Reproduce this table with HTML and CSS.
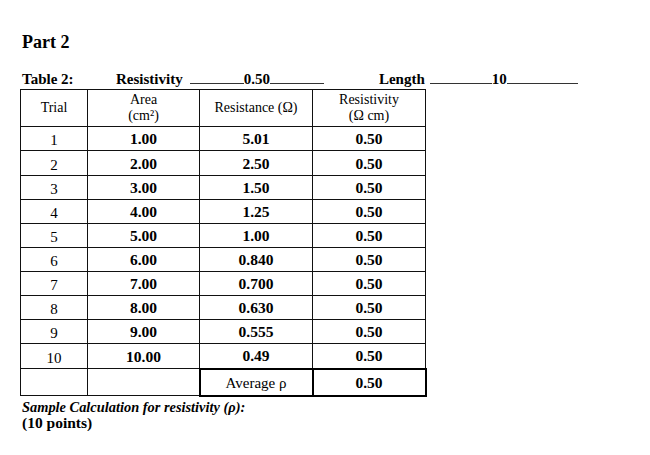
FILE: index.html
```html
<!DOCTYPE html>
<html>
<head>
<meta charset="utf-8">
<link rel="stylesheet" href="styles.css">
</head>
<body>
<div class="page">
  <h2 class="part">Part 2</h2>
  <div class="title-row">
    <span class="t-label">Table 2:</span>
    <span class="t-name">Resistivity</span>
    <span class="blank b1"></span><span class="t-val">0.50</span><span class="blank b2"></span>
    <span class="t-name t-length">Length</span>
    <span class="blank b3"></span><span class="t-val">10</span><span class="blank b4"></span>
  </div>
  <table class="data">
    <colgroup>
      <col class="c-trial"><col class="c-area"><col class="c-res"><col class="c-rho">
    </colgroup>
    <thead>
      <tr class="hdr">
        <th>Trial</th>
        <th>Area<br>(cm²)</th>
        <th>Resistance (Ω)</th>
        <th>Resistivity<br>(Ω cm)</th>
      </tr>
    </thead>
    <tbody>
      <tr class="r24"><td class="n">1</td><td>1.00</td><td>5.01</td><td>0.50</td></tr>
      <tr class="r25"><td class="n">2</td><td>2.00</td><td>2.50</td><td>0.50</td></tr>
      <tr class="r24"><td class="n">3</td><td>3.00</td><td>1.50</td><td>0.50</td></tr>
      <tr class="r24"><td class="n">4</td><td>4.00</td><td>1.25</td><td>0.50</td></tr>
      <tr class="r24"><td class="n">5</td><td>5.00</td><td>1.00</td><td>0.50</td></tr>
      <tr class="r24"><td class="n">6</td><td>6.00</td><td>0.840</td><td>0.50</td></tr>
      <tr class="r24"><td class="n">7</td><td>7.00</td><td>0.700</td><td>0.50</td></tr>
      <tr class="r24"><td class="n">8</td><td>8.00</td><td>0.630</td><td>0.50</td></tr>
      <tr class="r24"><td class="n">9</td><td>9.00</td><td>0.555</td><td>0.50</td></tr>
      <tr class="r25"><td class="n">10</td><td>10.00</td><td>0.49</td><td>0.50</td></tr>
      <tr class="avg">
        <td></td><td></td>
        <td class="avg-label">Average ρ</td>
        <td class="avg-val">0.50</td>
      </tr>
    </tbody>
  </table>
  <p class="sample">Sample Calculation for resistivity (ρ):</p>
  <p class="points">(10 points)</p>
</div>
</body>
</html>
```
FILE: styles.css
```css
html, body {
  margin: 0;
  padding: 0;
  background: #fff;
}
body {
  font-family: "Liberation Serif", "Times New Roman", serif;
  color: #000;
}
.page {
  padding: 33px 0 0 20px;
}
.part {
  margin: 0 0 0 2px;
  font-size: 18px;
  line-height: 18px;
  font-weight: bold;
}
.title-row {
  margin: 21px 0 0 2px;
  display: flex;
  align-items: baseline;
  font-size: 15px;
  line-height: 15px;
  font-weight: bold;
  height: 16px;
}
.t-label {
  width: 94px;
}
.t-name {
  display: inline-block;
}
.t-length {
  margin-left: 55px;
}
.blank {
  display: inline-block;
  height: 0;
  border-bottom: 1px solid #333;
}
.b1 { width: 54px; margin-left: 7px; }
.b2 { width: 54px; }
.b3 { width: 62px; margin-left: 5px; }
.b4 { width: 71px; }

.data {
  border-collapse: collapse;
  table-layout: fixed;
  width: 405px;
  margin-top: 1px;
}
.c-trial { width: 67px; }
.c-area { width: 112px; }
.c-res { width: 113px; }
.c-rho { width: 113px; }
.data th, .data td {
  border: 1px solid #111;
  padding: 0;
  text-align: center;
  vertical-align: middle;
}
.data th {
  font-weight: normal;
  font-size: 14px;
  line-height: 16px;
}
.hdr { height: 37px; }
.r24 { height: 24px; }
.r25 { height: 25px; }
.data td {
  font-size: 15.5px;
  line-height: 16px;
  font-weight: bold;
  padding-top: 1px;
}
.data td.n {
  font-weight: normal;
  font-size: 15px;
  padding-top: 3px;
}
.avg { height: 27px; }
.data td.avg-label {
  border: 2px solid #000;
  font-weight: normal;
  font-size: 15px;
  vertical-align: bottom;
  padding: 0 0 4px 0;
}
.data td.avg-val {
  border: 2px solid #000;
  vertical-align: top;
  padding-top: 5px;
}
.sample {
  margin: 3px 0 0 2px;
  font-size: 14.4px;
  line-height: 14px;
  font-weight: bold;
  font-style: italic;
}
.points {
  margin: 1px 0 0 2px;
  font-size: 15.5px;
  line-height: 16px;
  font-weight: bold;
}
```
